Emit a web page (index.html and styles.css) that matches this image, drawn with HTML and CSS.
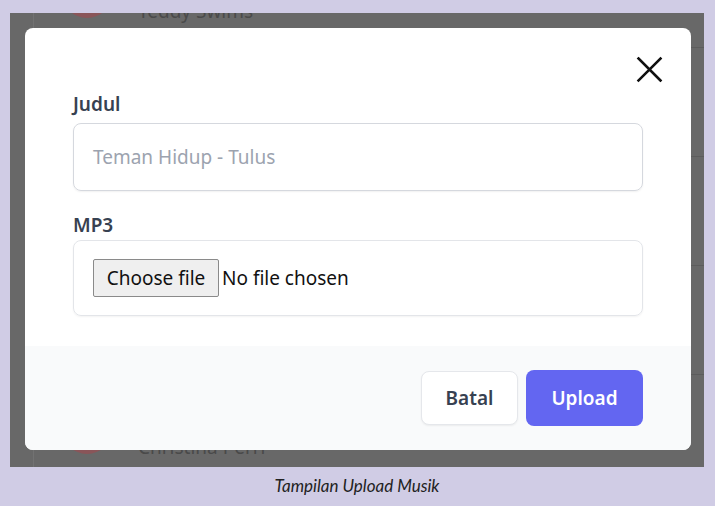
FILE: index.html
```html
<!DOCTYPE html>
<html lang="id">
<head>
<meta charset="utf-8">
<title>Tampilan Upload Musik</title>
<link rel="stylesheet" href="styles.css">
</head>
<body>
<div class="figure">
  <div class="frame">
    <div class="list">
      <div class="row"><span class="avatar"></span><span class="name">Teddy Swims</span></div>
      <div class="row"><span class="avatar"></span><span class="name">Tulus</span></div>
      <div class="row"><span class="avatar"></span><span class="name">Hindia</span></div>
      <div class="row"><span class="avatar"></span><span class="name">Nadin Amizah</span></div>
      <div class="row"><span class="avatar"></span><span class="name">Christina Perri</span></div>
    </div>
    <div class="modal">
      <button class="close" type="button" aria-label="Tutup">
        <svg width="33" height="33" viewBox="0 0 24 24" fill="none" stroke="#111" stroke-width="1.85" stroke-linecap="square"><path d="M4 4L20 20M20 4L4 20"/></svg>
      </button>
      <div class="modal-body">
        <label class="label">Judul</label>
        <div class="input"><span class="placeholder">Teman Hidup - Tulus</span></div>
        <label class="label label-2">MP3</label>
        <div class="filebox">
          <span class="filebtn">Choose file</span><span class="filetext">No file chosen</span>
        </div>
      </div>
      <div class="modal-footer">
        <button class="btn btn-cancel" type="button">Batal</button>
        <button class="btn btn-primary" type="button">Upload</button>
      </div>
    </div>
  </div>
  <p class="caption">Tampilan Upload Musik</p>
</div>
</body>
</html>
```
FILE: styles.css
```css
html, body {
  margin: 0;
  padding: 0;
}
body {
  background: #d0cce5;
  width: 715px;
  height: 506px;
  overflow: hidden;
  font-family: "Noto Sans", "Open Sans", sans-serif;
}
.figure {
  padding-top: 13px;
  padding-left: 10px;
}
.frame {
  position: relative;
  width: 694px;
  height: 454px;
  background: #686868;
  overflow: hidden;
}
.list {
  margin-left: 23px;
  margin-top: -74px;
  border-left: 1px solid #727272;
}
.row {
  height: 109px;
  border-bottom: 1px solid #5c5c5c;
  display: flex;
  align-items: flex-start;
  padding-top: 29px;
  padding-left: 28px;
  box-sizing: border-box;
  gap: 26px;
}
.avatar {
  width: 50px;
  height: 50px;
  border-radius: 50%;
  background: #8a5559;
  flex: none;
}
.name {
  margin-top: 29px;
  font-size: 19px;
  color: #4a4a4a;
  line-height: 28px;
}
.modal {
  position: absolute;
  left: 15px;
  top: 15px;
  width: 666px;
  height: 422px;
  background: #fff;
  border-radius: 8px;
  overflow: hidden;
  display: flex;
  flex-direction: column;
}
.close {
  position: absolute;
  top: 25px;
  right: 25px;
  padding: 0;
  margin: 0;
  border: 0;
  background: none;
  display: block;
  line-height: 0;
}
.modal-body {
  padding: 63px 48px 30px 48px;
  display: flex;
  flex-direction: column;
}
.label {
  font-size: 19px;
  line-height: 26px;
  font-weight: 560;
  color: #374151;
  margin-bottom: 6px;
}
.label-2 {
  margin-top: 21px;
  margin-bottom: 2px;
}
.input {
  height: 68px;
  box-sizing: border-box;
  border: 1.5px solid #d5d8de;
  border-radius: 8px;
  box-shadow: 0 1px 2px rgba(0,0,0,0.06);
  display: flex;
  align-items: center;
  padding-left: 19px;
}
.placeholder {
  font-size: 19px;
  color: #9ca3af;
}
.filebox {
  height: 76px;
  box-sizing: border-box;
  border: 1px solid #e3e5e9;
  border-radius: 8px;
  box-shadow: 0 1px 2px rgba(0,0,0,0.05);
  display: flex;
  align-items: center;
  padding-left: 19px;
}
.filebtn {
  height: 38px;
  width: 126px;
  box-sizing: border-box;
  border: 1px solid #8a8a8a;
  border-radius: 2px;
  background: #efefef;
  font-size: 19px;
  color: #111;
  display: flex;
  align-items: center;
  justify-content: center;
}
.filetext {
  font-size: 19px;
  color: #111;
  margin-left: 3px;
}
.modal-footer {
  flex: 1;
  background: #f9fafb;
  display: flex;
  justify-content: flex-end;
  align-items: center;
  gap: 8px;
  padding: 0 48px;
}
.btn {
  height: 56px;
  box-sizing: border-box;
  border-radius: 8px;
  font-family: inherit;
  font-size: 19px;
  font-weight: 570;
  margin: 0;
  cursor: pointer;
}
.btn-cancel {
  width: 97px;
  height: 54px;
  background: #fff;
  color: #374151;
  border: 1px solid #e5e7eb;
  box-shadow: 0 1px 2px rgba(0,0,0,0.06);
}
.btn-primary {
  width: 117px;
  background: #6366f1;
  color: #fff;
  border: 0;
}
.caption {
  margin: 9px 0 0 0;
  width: 694px;
  text-align: center;
  font-family: Lato, "Noto Sans", sans-serif;
  font-style: italic;
  font-size: 17px;
  line-height: 20px;
  color: #222;
}
```
